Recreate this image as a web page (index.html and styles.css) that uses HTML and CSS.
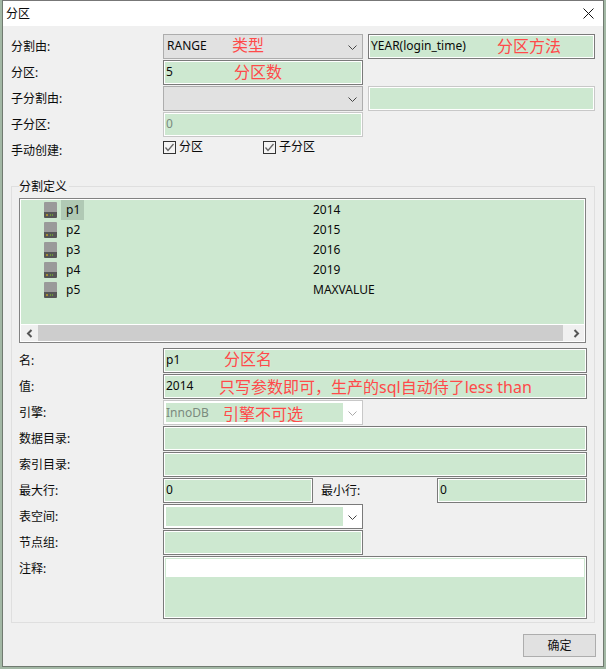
FILE: index.html
```html
<!DOCTYPE html>
<html lang="zh">
<head>
<meta charset="utf-8">
<title>分区</title>
<link rel="stylesheet" href="styles.css">
</head>
<body>
<svg class="defs" width="0" height="0" aria-hidden="true">
  <symbol id="chev" viewBox="0 0 9 5"><path d="M.5.5 4.5 4.5 8.5.5" fill="none" stroke="currentColor" stroke-width="1"/></symbol>
  <symbol id="disk" viewBox="0 0 13 16">
    <path d="M1 0h11a1 1 0 0 1 1 1v9H0V1a1 1 0 0 1 1-1z" fill="#9a9a9a"/>
    <path d="M0 10h13v5a1 1 0 0 1-1 1H1a1 1 0 0 1-1-1z" fill="#555"/>
    <rect x="2" y="12.5" width="2" height="1" fill="#f5c518"/>
    <rect x="6" y="12.5" width="1" height="1" fill="#7ed321"/>
    <rect x="8" y="12.5" width="1" height="1" fill="#7ed321"/>
  </symbol>
  <symbol id="check" viewBox="0 0 13 13">
    <rect x=".5" y=".5" width="12" height="12" fill="#f4f4f4" stroke="#333"/>
    <path d="M2.5 6.5 5 9.5 10.5 3" fill="none" stroke="#666" stroke-width="1.3"/>
  </symbol>
</svg>
<div class="window">
  <header class="titlebar">
    <span class="title">分区</span>
    <svg class="close" viewBox="0 0 11 11"><path d="M.5.5l10 10M10.5.5l-10 10" stroke="#111" stroke-width="1" fill="none"/></svg>
  </header>
  <main class="body">
    <section class="top">
      <div class="row">
        <label class="lbl lbl-top">分割由:</label>
        <div class="select combo w200"><span>RANGE</span><em class="note n-type">类型</em><svg class="chev"><use href="#chev"/></svg></div>
        <div class="field w227 gap5"><span>YEAR(login_time)</span><em class="note n-method">分区方法</em></div>
      </div>
      <div class="row">
        <label class="lbl lbl-top">分区:</label>
        <div class="field w200"><span>5</span><em class="note n-count">分区数</em></div>
      </div>
      <div class="row">
        <label class="lbl lbl-top">子分割由:</label>
        <div class="select combo w200"><svg class="chev"><use href="#chev"/></svg></div>
        <div class="field off w227 gap5"></div>
      </div>
      <div class="row">
        <label class="lbl lbl-top">子分区:</label>
        <div class="field off w200 muted"><span>0</span></div>
      </div>
      <div class="row checks">
        <label class="lbl lbl-top">手动创建:</label>
        <div class="checkline">
          <div class="chk chk-a"><svg class="box"><use href="#check"/></svg><span>分区</span></div>
          <div class="chk"><svg class="box"><use href="#check"/></svg><span>子分区</span></div>
        </div>
      </div>
    </section>
    <section class="group">
      <div class="legend">分割定义</div>
      <div class="list">
        <div class="items">
          <div class="item"><svg class="disk"><use href="#disk"/></svg><span class="name sel">p1</span><span class="val">2014</span></div>
          <div class="item"><svg class="disk"><use href="#disk"/></svg><span class="name">p2</span><span class="val">2015</span></div>
          <div class="item"><svg class="disk"><use href="#disk"/></svg><span class="name">p3</span><span class="val">2016</span></div>
          <div class="item"><svg class="disk"><use href="#disk"/></svg><span class="name">p4</span><span class="val">2019</span></div>
          <div class="item"><svg class="disk"><use href="#disk"/></svg><span class="name">p5</span><span class="val">MAXVALUE</span></div>
        </div>
        <div class="scroll">
          <div class="sbtn"><svg viewBox="0 0 7 9"><path d="M5.5 1 2 4.5 5.5 8" fill="none" stroke="#555" stroke-width="2"/></svg></div>
          <div class="thumb"></div>
          <div class="sbtn sbtn-end"><svg viewBox="0 0 7 9"><path d="M1.5 1 5 4.5 1.5 8" fill="none" stroke="#555" stroke-width="2"/></svg></div>
        </div>
      </div>
      <div class="form">
        <div class="row"><label class="lbl">名:</label><div class="field w424"><span>p1</span><em class="note n-name">分区名</em></div></div>
        <div class="row"><label class="lbl">值:</label><div class="field w424"><span>2014</span><em class="note n-val">只写参数即可，生产的sql自动待了less than</em></div></div>
        <div class="row"><label class="lbl">引擎:</label><div class="select white off w200 muted"><div class="inner"><span>InnoDB</span><em class="note n-eng">引擎不可选</em></div><svg class="chev"><use href="#chev"/></svg></div></div>
        <div class="row"><label class="lbl">数据目录:</label><div class="field w424"></div></div>
        <div class="row"><label class="lbl">索引目录:</label><div class="field w424"></div></div>
        <div class="row">
          <label class="lbl">最大行:</label><div class="field w150"><span>0</span></div>
          <label class="lbl lbl-min">最小行:</label><div class="field w150"><span>0</span></div>
        </div>
        <div class="row"><label class="lbl">表空间:</label><div class="select white w200"><div class="inner"></div><svg class="chev"><use href="#chev"/></svg></div></div>
        <div class="row"><label class="lbl">节点组:</label><div class="field w200"></div></div>
        <div class="row tall"><label class="lbl">注释:</label><div class="field memo w424"><div class="memo-line"></div></div></div>
      </div>
    </section>
    <footer class="foot"><button class="ok" type="button">确定</button></footer>
  </main>
</div>
</body>
</html>
```
FILE: styles.css
```css
* { box-sizing: border-box; }
html, body { margin: 0; height: 669px; overflow: hidden; }
body {
  width: 606px;
  background: #a3b8a5;
  padding: 0 2px 0 2px;
  font: 12px/16px "Noto Sans", "Noto Sans CJK SC", sans-serif;
  color: #0a0a0a;
}
.defs { position: absolute; }
.window {
  width: 602px;
  height: 667px;
  border: 1px solid #707a70;
  border-top-color: #777;
  background: #f0f0f0;
  display: flex;
  flex-direction: column;
}
.titlebar {
  height: 25px;
  flex: none;
  background: #fff;
  display: flex;
  align-items: center;
  justify-content: space-between;
  padding: 0 9px 0 3px;
}
.title { font-size: 12px; }
.close { width: 11px; height: 11px; }
.body { flex: 1; padding: 8px 7px 0 8px; display: flex; flex-direction: column; }
.top { height: 152px; flex: none; }
.row { display: flex; height: 25px; margin-bottom: 1px; align-items: stretch; }
.lbl { width: 144px; flex: none; line-height: 26px; }
.lbl-top { width: 152px; }
.lbl-min { width: 116px; margin-left: 8px; }
.field, .select {
  position: relative;
  flex: none;
  height: 25px;
  display: flex;
  align-items: center;
  white-space: nowrap;
}
.field {
  border: 1px solid #7a7a7a;
  background: #cde8d0;
  box-shadow: inset 0 0 0 1px #fff;
  padding: 0 2px 2px;
}
.off { border-color: #c8c8c8 !important; }
.muted { color: #7b8a7e; }
.w150 { width: 150px; }
.w200 { width: 200px; }
.w227 { width: 227px; }
.w424 { width: 424px; }
.gap5 { margin-left: 5px; }
.select { border: 1px solid #adadad; }
.combo { background: #e1e1e1; padding: 0 3px 2px; }
.white { background: #fff; border-color: #7a7a7a; padding: 2px; }
.inner {
  position: relative;
  width: 177px;
  height: 19px;
  background: #cde8d0;
  display: flex;
  align-items: center;
}
.chev {
  position: absolute;
  right: 5px;
  top: 10px;
  width: 9px;
  height: 5px;
  color: #444;
}
.off .chev { color: #aaa; }
.note {
  position: absolute;
  font-style: normal;
  font-size: 16px;
  line-height: 20px;
  color: #ff4a4a;
  white-space: nowrap;
}
.n-type { left: 68px; top: 0; }
.n-count { left: 70px; top: 1px; }
.n-method { left: 128px; top: 1px; }
.n-name { left: 60px; top: 0; }
.n-val { left: 55px; top: 2px; }
.n-eng { left: 57px; top: 1px; }
.checkline { display: flex; padding-top: 3px; height: 16px; }
.chk { display: flex; align-items: center; gap: 3px; }
.chk span { margin-bottom: 2px; }
.chk-a { width: 100px; }
.box { width: 13px; height: 13px; }
.group {
  width: 584px;
  height: 437px;
  flex: none;
  border: 1px solid #dfdfdf;
  padding: 0 7px;
}
.legend {
  background: #f0f0f0;
  width: 50px;
  height: 16px;
  margin-top: -8px;
  line-height: 16px;
}
.list {
  width: 567px;
  height: 145px;
  margin-top: 3px;
  border: 1px solid #828282;
  background: #fff;
  padding: 1px;
  display: flex;
  flex-direction: column;
}
.items { flex: 1; background: #cde8d0; margin-bottom: 1px; }
.item { height: 20px; display: flex; align-items: center; padding-left: 23px; }
.disk { width: 13px; height: 16px; flex: none; }
.name { width: 23px; height: 20px; margin-left: 4px; padding-left: 5px; line-height: 20px; flex: none; }
.sel { background: #b0c9b4; }
.val { margin-left: 229px; }
.scroll { height: 16px; display: flex; background: #f0f0f0; flex: none; }
.sbtn { width: 17px; display: flex; align-items: center; justify-content: center; }
.sbtn-end { width: 21px; padding-left: 5px; }
.sbtn svg { width: 7px; height: 9px; }
.thumb { flex: 1; background: #cdcdcd; }
.form { margin-top: 5px; }
.tall { height: 63px; }
.memo { height: 63px; display: block; padding: 2px 2px 0; }
.memo-line { height: 18px; background: #fff; }
.foot { display: flex; justify-content: flex-end; padding-top: 11px; }
.ok {
  width: 73px;
  height: 23px;
  background: #e1e1e1;
  border: 1px solid #adadad;
  font: inherit;
  color: #111;
  padding: 0;
}
```
